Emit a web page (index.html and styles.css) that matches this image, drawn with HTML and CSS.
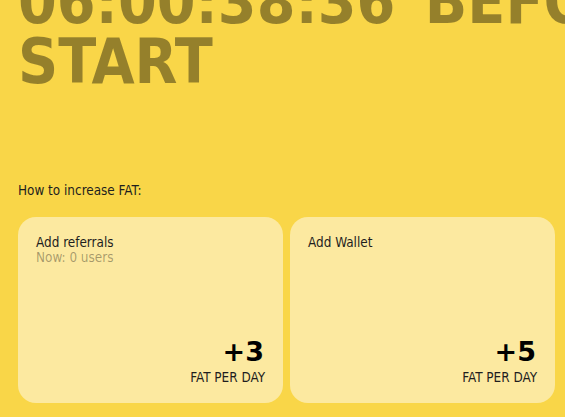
FILE: index.html
```html
<!DOCTYPE html>
<html lang="en">
<head>
<meta charset="utf-8">
<title>FAT</title>
<link rel="stylesheet" href="styles.css">
</head>
<body>
<main class="page">
  <h1 class="countdown">06:00:38:36 BEFORE<br>START</h1>
  <p class="label">How to increase FAT:</p>
  <div class="cards">
    <section class="card">
      <div class="card-top">
        <div class="card-title">Add referrals</div>
        <div class="card-sub">Now: 0 users</div>
      </div>
      <div class="card-bottom">
        <div class="amount">+3</div>
        <div class="unit">FAT PER DAY</div>
      </div>
    </section>
    <section class="card">
      <div class="card-top">
        <div class="card-title">Add Wallet</div>
      </div>
      <div class="card-bottom">
        <div class="amount">+5</div>
        <div class="unit">FAT PER DAY</div>
      </div>
    </section>
  </div>
</main>
</body>
</html>
```
FILE: styles.css
```css
html, body {
  margin: 0;
  padding: 0;
  background: #f9d648;
  overflow: hidden;
}
body {
  font-family: "DejaVu Sans Condensed", "DejaVu Sans", sans-serif;
  color: #1e1e1e;
}
.page {
  padding: 0 10px 0 18px;
}
.countdown {
  margin: -28px 0 0 0;
  font-size: 62px;
  line-height: 60px;
  font-weight: bold;
  color: rgba(0, 0, 0, 0.4);
  white-space: nowrap;
  word-spacing: 10px;
}
.label {
  margin: 91px 0 18px 0;
  font-size: 13.4px;
  line-height: 16px;
}
.cards {
  display: grid;
  grid-template-columns: 265px 265px;
  gap: 7px;
}
.card {
  background: #fce9a0;
  border-radius: 18px;
  height: 186px;
  box-sizing: border-box;
  padding: 18px 18px 18px 18px;
  display: flex;
  flex-direction: column;
  justify-content: space-between;
}
.card-title, .card-sub {
  font-size: 13.4px;
  line-height: 15px;
}
.card-sub {
  color: rgba(0, 0, 0, 0.35);
}
.card-bottom {
  text-align: right;
}
.amount {
  font-family: "DejaVu Sans", sans-serif;
  font-size: 27px;
  line-height: 26px;
  font-weight: bold;
  color: #000;
  margin: 0 1px 5px 0;
}
.unit {
  font-size: 13.4px;
  line-height: 15px;
}
```
